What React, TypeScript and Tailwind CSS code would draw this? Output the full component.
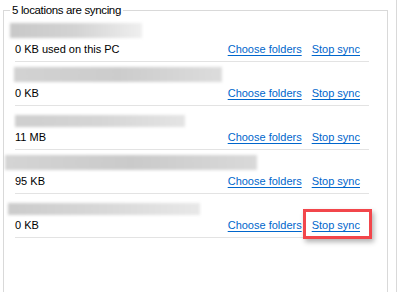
import React from "react";

type Loc = {
  size: string;
  blur: string;
  blurBox: string;
};

// blurred location names, placed inside a 23px slot above each size line
const locations: Loc[] = [
  { size: "0 KB used on this PC", blur: "from-[#c8c8c8] via-[#d3d3d3] to-[#efefef]", blurBox: "mt-[5px] h-[15px] w-[132px] -ml-[5px]" },
  { size: "0 KB", blur: "from-[#d2d2d2] via-[#cccccc] to-[#dcdcdc]", blurBox: "mt-[5px] h-[15px] w-[208px] -ml-[1px]" },
  { size: "11 MB", blur: "from-[#cecece] via-[#d5d5d5] to-[#e4e4e4]", blurBox: "mt-[9px] h-[12px] w-[170px] ml-0" },
  { size: "95 KB", blur: "from-[#d4d4d4] via-[#cacaca] to-[#d9d9d9]", blurBox: "mt-[5px] h-[15px] w-[252px] -ml-[10px]" },
  { size: "0 KB", blur: "from-[#cbcbcb] via-[#d8d8d8] to-[#e8e8e8]", blurBox: "mt-[9px] h-[12px] w-[192px] -ml-[7px]" },
];

function Links({ highlight }: { highlight: boolean }) {
  return (
    <div className="flex items-center gap-[10px] pr-[9px]">
      <a href="#" className="text-[#0066cc] underline underline-offset-[2px]">
        Choose folders
      </a>
      <span className="relative">
        <a href="#" className="text-[#0066cc] underline underline-offset-[2px]">
          Stop sync
        </a>
        {highlight && (
          <span className="pointer-events-none absolute -left-[9px] -right-[12px] -top-[8px] -bottom-[6px] border-[3px] border-[#f2464b] shadow-[2px_3px_5px_rgba(0,0,0,0.3)]" />
        )}
      </span>
    </div>
  );
}

export default function App() {
  return (
    <div
      className="relative h-[292px] w-[397px] overflow-hidden border-r border-[#d9d9d9] bg-white text-[11px] text-black"
      style={{ fontFamily: '"Liberation Sans", Arial, sans-serif' }}
    >
      <fieldset className="ml-[3px] mt-[2px] h-[320px] w-[385px] border border-[#d9d9d9]">
        <legend className="ml-[6px] px-[2px] text-[11.5px] leading-[16px] tracking-[-0.35px]">5 locations are syncing</legend>
        <div className="pl-[11px] pr-[18px]">
          {locations.map((loc, i) => (
            <div key={i} className="border-b border-[#e3e3e3] pb-[4px]">
              <div className="flex h-[23px] flex-col">
                <div className={`${loc.blurBox} bg-linear-to-r ${loc.blur} blur-[1.5px]`} />
              </div>
              <div className="flex h-[16px] items-center leading-[16px]">
                <span className="flex-1">{loc.size}</span>
                <Links highlight={i === locations.length - 1} />
              </div>
            </div>
          ))}
        </div>
      </fieldset>
    </div>
  );
}
